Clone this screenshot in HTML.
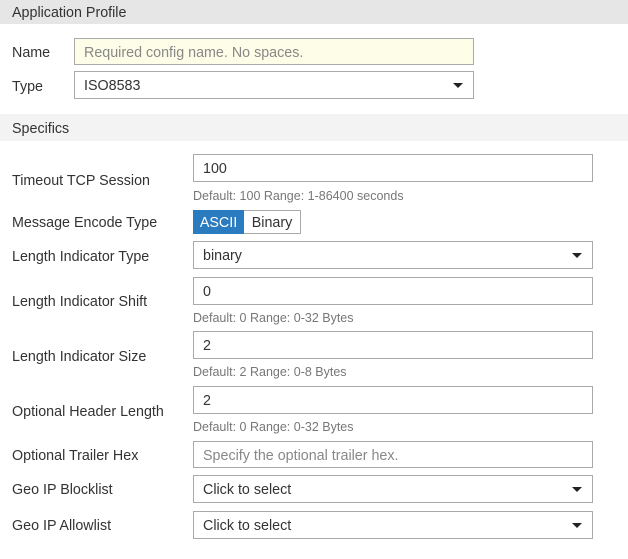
<!DOCTYPE html>
<html><head><style>
body{margin:0;width:628px;height:559px;background:#fff;font-family:"Liberation Sans",sans-serif;font-size:14px;color:#333;position:relative;overflow:hidden}
.a{position:absolute}
.bar{position:absolute;left:0;width:628px}
.in{position:absolute;box-sizing:border-box;border:1px solid #aaa;background:#fff;padding-left:9px;padding-top:2px;display:flex;align-items:center;font-size:14.3px;color:#333}
.ph{color:#888}
.lbl{position:absolute;left:12px;font-size:14.3px;line-height:16px;transform:translateY(1px)}
.help{position:absolute;left:193px;font-size:12.5px;color:#777;line-height:14px}
.car{position:absolute;right:10px;top:50%;margin-top:-2px;width:0;height:0;border-left:5px solid transparent;border-right:5px solid transparent;border-top:5px solid #222}
</style></head><body>
<div class="bar" style="top:0;height:24px;background:#e6e6e6"><span class="a" style="left:12px;top:5px;font-size:14.3px">Application Profile</span></div>
<div class="lbl" style="top:44px">Name</div>
<div class="in ph" style="left:74px;top:38px;width:400px;height:27px;background:#fefde8">Required config name. No spaces.</div>
<div class="lbl" style="top:78px">Type</div>
<div class="in" style="left:74px;top:71px;width:400px;height:28px">ISO8583<div class="car"></div></div>
<div class="bar" style="top:114px;height:27px;background:#f3f3f3"><span class="a" style="left:12px;top:7px;font-size:14.3px">Specifics</span></div>

<div class="lbl" style="top:172px">Timeout TCP Session</div>
<div class="in" style="left:193px;top:154px;width:400px;height:28px">100</div>
<div class="help" style="top:189px">Default: 100 Range: 1-86400 seconds</div>

<div class="lbl" style="top:214px">Message Encode Type</div>
<div class="a" style="left:193px;top:210px;width:51px;height:24px;padding-top:2px;box-sizing:border-box;background:#2b7bc0;color:#fff;display:flex;align-items:center;justify-content:center;font-size:14.3px">ASCII</div>
<div class="a" style="left:244px;top:210px;width:57px;height:24px;padding-top:2px;box-sizing:border-box;border:1px solid #aaa;border-left:none;display:flex;align-items:center;justify-content:center;font-size:14.3px">Binary</div>

<div class="lbl" style="top:248px">Length Indicator Type</div>
<div class="in" style="left:193px;top:241px;width:400px;height:28px">binary<div class="car"></div></div>

<div class="lbl" style="top:293px">Length Indicator Shift</div>
<div class="in" style="left:193px;top:277px;width:400px;height:28px">0</div>
<div class="help" style="top:311px">Default: 0 Range: 0-32 Bytes</div>

<div class="lbl" style="top:348px">Length Indicator Size</div>
<div class="in" style="left:193px;top:331px;width:400px;height:28px">2</div>
<div class="help" style="top:365px">Default: 2 Range: 0-8 Bytes</div>

<div class="lbl" style="top:403px">Optional Header Length</div>
<div class="in" style="left:193px;top:386px;width:400px;height:28px">2</div>
<div class="help" style="top:420px">Default: 0 Range: 0-32 Bytes</div>

<div class="lbl" style="top:447px">Optional Trailer Hex</div>
<div class="in ph" style="left:193px;top:441px;width:400px;height:27px">Specify the optional trailer hex.</div>

<div class="lbl" style="top:481px">Geo IP Blocklist</div>
<div class="in" style="left:193px;top:475px;width:400px;height:28px">Click to select<div class="car"></div></div>

<div class="lbl" style="top:517px">Geo IP Allowlist</div>
<div class="in" style="left:193px;top:511px;width:400px;height:28px">Click to select<div class="car"></div></div>
</body></html>
